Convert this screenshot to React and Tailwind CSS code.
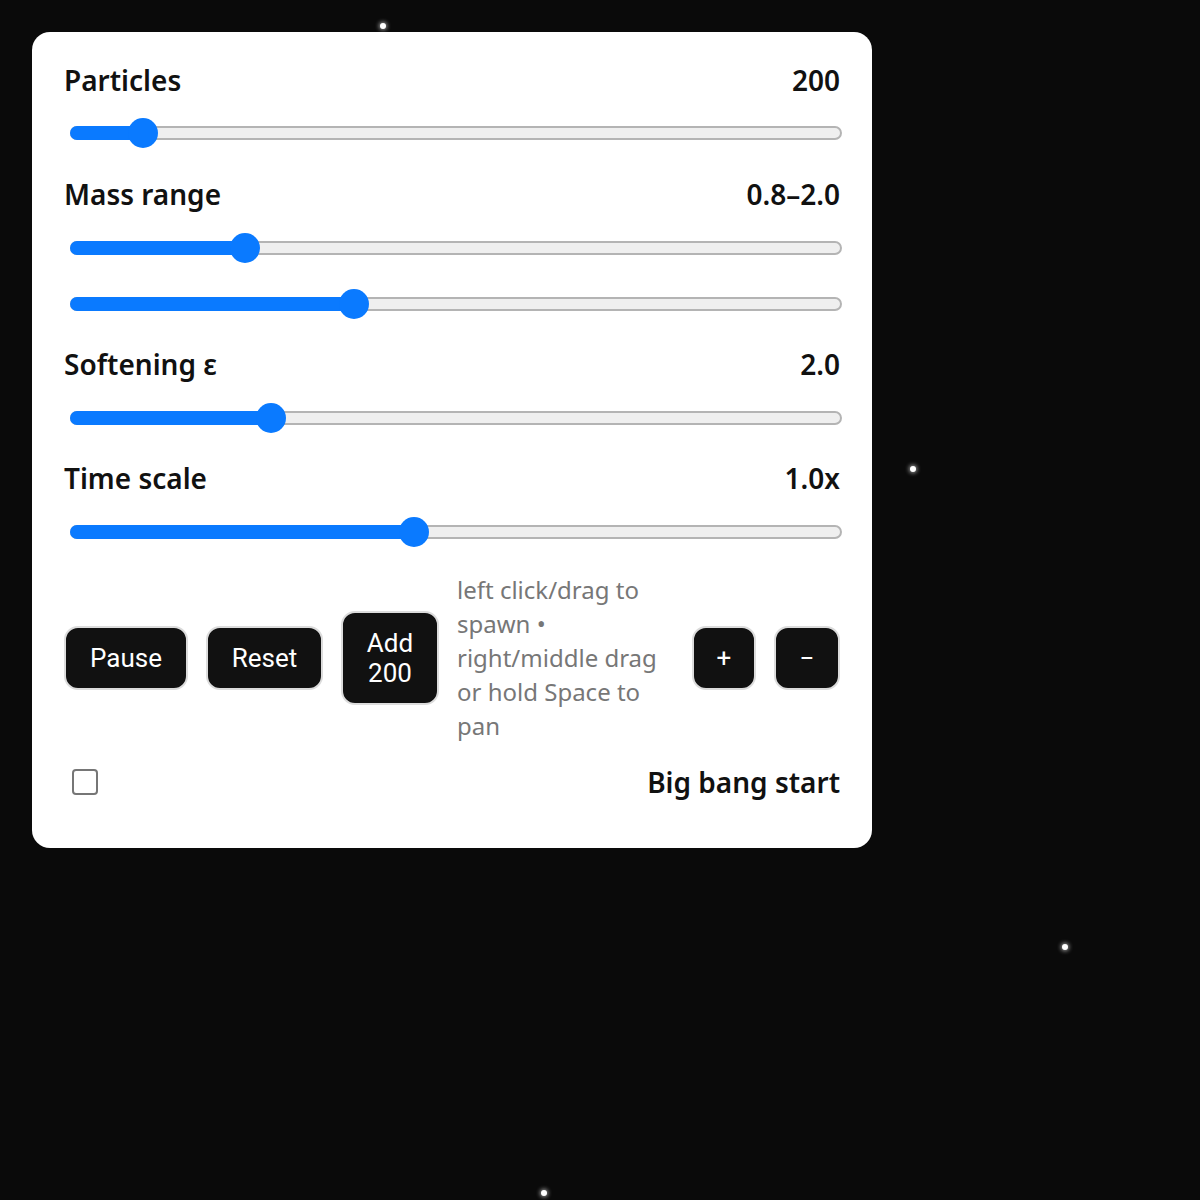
import { useState } from "react";

const labelFont = { fontFamily: '"Noto Sans", sans-serif' };

function Slider({ value }) {
  return (
    <div className="relative -mr-[2px] flex h-[30px] items-center pl-[6px]">
      <div className="h-[14px] w-full rounded-full border-2 border-[#b4b4b4] bg-[#efefef]" />
      <div
        className="absolute left-[6px] top-[8px] h-[14px] rounded-full bg-[#0a7aff]"
        style={{ width: `calc(${value} * (100% - 36px) + 15px)` }}
      />
      <div
        className="absolute top-0 h-[30px] w-[30px] rounded-full bg-[#0a7aff]"
        style={{ left: `calc(${value} * (100% - 36px) + 6px)` }}
      />
    </div>
  );
}

function Row({ label, value }) {
  return (
    <div className="flex items-center justify-between text-[28px] font-semibold leading-[38px] text-[#111]">
      <span>{label}</span>
      <span>{value}</span>
    </div>
  );
}

function Button({ children, className = "" }) {
  return (
    <button
      className={
        "rounded-[14px] border-2 border-[#dcdcdc] bg-[#111] text-[26px] leading-[30px] text-white " +
        className
      }
      style={{ fontFamily: "Roboto, sans-serif" }}
    >
      {children}
    </button>
  );
}

function Star({ className }) {
  return <div className={"absolute h-[6px] w-[6px] rounded-full bg-white shadow-[0_0_4px_1px_rgba(255,255,255,0.6)] " + className} />;
}

export default function App() {
  const [bigBang, setBigBang] = useState(false);

  return (
    <div className="relative min-h-[1200px] bg-[#0a0a0a] p-8" style={labelFont}>
      <Star className="left-[380px] top-[23px]" />
      <Star className="left-[910px] top-[466px]" />
      <Star className="left-[1062px] top-[944px]" />
      <Star className="left-[541px] top-[1190px]" />

      <div className="relative w-[840px] rounded-[18px] bg-white px-8 pt-[29px] pb-[47px]">
        <Row label="Particles" value="200" />
        <div className="mt-[19px]">
          <Slider value={0.078} />
        </div>

        <div className="mt-[27px]">
          <Row label="Mass range" value="0.8–2.0" />
        </div>
        <div className="mt-[20px]">
          <Slider value={0.215} />
        </div>
        <div className="mt-[26px]">
          <Slider value={0.363} />
        </div>

        <div className="mt-[26px]">
          <Row label="Softening ε" value="2.0" />
        </div>
        <div className="mt-[20px]">
          <Slider value={0.25} />
        </div>

        <div className="mt-[26px]">
          <Row label="Time scale" value="1.0x" />
        </div>
        <div className="mt-[20px]">
          <Slider value={0.444} />
        </div>

        <div className="mt-[26px] flex items-center gap-[18px]">
          <Button className="h-[64px] w-[124px]">Pause</Button>
          <Button className="h-[64px] w-[117px]">Reset</Button>
          <Button className="h-[94px] w-[98px]">
            Add
            <br />
            200
          </Button>
          <p className="flex-1 text-[24px] leading-[34px] text-[#777]">
            left click/drag to spawn • right/middle drag or hold Space to pan
          </p>
          <Button className="h-[64px] w-[64px]">+</Button>
          <Button className="h-[64px] w-[66px]">−</Button>
        </div>

        <label className="mt-[20px] flex items-center justify-between">
          <input
            type="checkbox"
            checked={bigBang}
            onChange={(e) => setBigBang(e.target.checked)}
            className="ml-[8px] h-[26px] w-[26px] appearance-none rounded-[4px] border-2 border-[#767676] bg-white"
          />
          <span className="text-[28px] font-semibold leading-[38px] text-[#111]">Big bang start</span>
        </label>
      </div>
    </div>
  );
}
